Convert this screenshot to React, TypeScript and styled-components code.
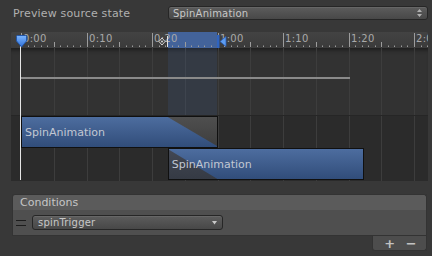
import React from 'react';
import styled, { createGlobalStyle } from 'styled-components';

const PX_PER_FRAME = 6.55;
const ORIGIN = 10; // x of frame 0 inside the timeline
const TIMELINE_W = 417;
const fx = (f: number) => ORIGIN + f * PX_PER_FRAME;

const Global = createGlobalStyle`
  html, body { margin: 0; padding: 0; background: #383838; }
  body { font-family: "DejaVu Sans", "Liberation Sans", sans-serif; }
`;

const Page = styled.div`
  width: 432px;
  height: 256px;
  background: #383838;
  display: flex;
  flex-direction: column;
  overflow: hidden;
`;

const TopRow = styled.div`
  display: flex;
  align-items: center;
  height: 26px;
  padding: 0 4px 0 13px;
`;

const FieldLabel = styled.span`
  width: 155px;
  font-size: 11px;
  letter-spacing: 0.15px;
  color: #b0b0b0;
`;

const Popup = styled.div<{ $width?: number }>`
  ${(p) => (p.$width ? `width: ${p.$width}px;` : 'flex: 1;')}
  box-sizing: border-box;
  height: ${(p) => (p.$width ? 15 : 14)}px;
  border: 1px solid #262626;
  border-radius: 3px;
  background: linear-gradient(#5c5c5c, #484848);
  box-shadow: inset 0 1px 0 rgba(255, 255, 255, 0.07);
  display: flex;
  align-items: center;
  justify-content: space-between;
  padding: 0 5px 0 ${(p) => (p.$width ? 5 : 4)}px;
  font-size: 10px;
  letter-spacing: 0.2px;
  color: #c8c8c8;
`;

const Timeline = styled.div`
  margin: 6px 4px 0 11px;
  width: ${TIMELINE_W}px;
  position: relative;
  display: flex;
  flex-direction: column;
  overflow: hidden;
`;

const Ruler = styled.div`
  position: relative;
  height: 16px;
  background: linear-gradient(#434343, #3b3b3b);
  border-radius: 2px 2px 0 0;
`;

const Band = styled.div<{ $strong?: boolean }>`
  position: absolute;
  top: 0;
  bottom: 0;
  background: ${(p) => (p.$strong ? '#43639a' : 'rgba(66, 104, 170, 0.16)')};
`;

const Layer = styled.svg`
  position: absolute;
  left: 0;
  top: 0;
  width: 100%;
  height: 100%;
`;

const TickLabel = styled.span`
  position: absolute;
  top: 1px;
  font-size: 10px;
  line-height: 12px;
  color: #a9a9a9;
  letter-spacing: 0.3px;
  white-space: nowrap;
`;

const Curves = styled.div`
  position: relative;
  height: 67px;
  background: #323232;
  box-shadow: inset 0 5px 4px -3px rgba(0, 0, 0, 0.45);
  display: flex;
  flex-direction: column;
`;

const CurveLine = styled.div`
  position: relative;
  margin-top: 29px;
  height: 2px;
  background: #8a8a8a;
`;

const Bars = styled.div`
  position: relative;
  height: 65px;
  border-top: 1px solid #262626;
  background: #2b2b2b;
  display: flex;
  flex-direction: column;
`;

const BarRow = styled.div`
  position: relative;
  height: 32px;
  display: flex;
`;

const Bar = styled.div`
  position: relative;
  box-sizing: border-box;
  height: 32px;
  border: 1px solid #101010;
  background: linear-gradient(#4d6d9f, #314d7a);
  overflow: hidden;
  display: flex;
  align-items: center;
  padding-left: 3px;
  font-size: 11px;
  color: #c2c7d2;
`;

const Fade = styled.div<{ $dir: 'out' | 'in' }>`
  position: absolute;
  top: 0;
  bottom: 0;
  background: ${(p) =>
    p.$dir === 'out'
      ? 'linear-gradient(#4f4f4f, #3d3d3d)'
      : 'linear-gradient(#434854, #353a44)'};
  clip-path: ${(p) =>
    p.$dir === 'out'
      ? 'polygon(0 0, 100% 0, 100% 100%)'
      : 'polygon(0 0, 100% 100%, 0 100%)'};
`;

const BarText = styled.span`
  position: relative;
`;

const Playhead = styled.div`
  position: absolute;
  left: 9px;
  top: 14px;
  bottom: 1px;
  width: 1px;
  background: #e6e6e6;
`;

const Marker = styled.svg`
  position: absolute;
`;

const Conditions = styled.div`
  margin: 13px 5px 0 12px;
  display: flex;
  flex-direction: column;
`;

const CondHeader = styled.div`
  height: 16px;
  box-sizing: border-box;
  border: 1px solid #333;
  border-bottom: none;
  border-radius: 3px 3px 0 0;
  background: #5b5b5b;
  display: flex;
  align-items: center;
  padding-left: 7px;
  font-size: 11px;
  color: #c6c6c6;
`;

const CondBody = styled.div`
  height: 26px;
  box-sizing: border-box;
  border: 1px solid #333;
  border-top: none;
  background: #4f4f4f;
  display: flex;
  align-items: center;
  padding-left: 3px;
  gap: 6px;
`;

const Handle = styled.div`
  width: 10px;
  height: 4px;
  border-top: 1px solid #1c1c1c;
  border-bottom: 1px solid #1c1c1c;
  margin-top: 1px;
`;

const Footer = styled.div`
  align-self: flex-end;
  width: 55px;
  height: 15px;
  box-sizing: border-box;
  border: 1px solid #333;
  border-top: none;
  border-radius: 0 0 3px 3px;
  background: #4d4d4d;
  display: flex;
  align-items: center;
  justify-content: space-around;
  padding: 0 4px 0 6px;
`;

const FooterButton = styled.span`
  font-size: 13px;
  font-weight: bold;
  line-height: 13px;
  color: #c2c2c2;
`;

const majorFrames = [0, 10, 20, 30, 40, 50, 60];
const label = (f: number) => `${Math.floor(f / 30)}:${String(f % 30).padStart(2, '0')}`;

const transStart = 22.4;
const transEnd = 30;
const clipLen = 30;

function RulerTicks() {
  const ticks: React.ReactNode[] = [];
  for (let f = 0; f <= 63; f++) {
    const x = Math.round(fx(f)) + 0.5;
    const y1 = f % 10 === 0 ? 1 : f % 5 === 0 ? 10 : 13.5;
    ticks.push(<line key={f} x1={x} x2={x} y1={y1} y2={15} stroke="#9c9c9c" strokeWidth={1} />);
  }
  return (
    <Layer viewBox={`0 0 ${TIMELINE_W} 16`} preserveAspectRatio="none">
      {ticks}
    </Layer>
  );
}

function Grid({ h }: { h: number }) {
  const lines: React.ReactNode[] = [];
  for (let k = 1; k <= 13; k++) {
    const x = Math.round(fx(k * 5)) + 0.5;
    lines.push(<line key={k} x1={x} x2={x} y1={0} y2={h} stroke="#3d3d3d" strokeWidth={1} />);
  }
  return (
    <Layer viewBox={`0 0 ${TIMELINE_W} ${h}`} preserveAspectRatio="none">
      {lines}
    </Layer>
  );
}

export default function App() {
  const bandLeft = fx(transStart);
  const bandWidth = fx(transEnd) - fx(transStart);
  return (
    <Page>
      <Global />
      <TopRow>
        <FieldLabel>Preview source state</FieldLabel>
        <Popup>
          <span>SpinAnimation</span>
          <svg width="5" height="8" viewBox="0 0 5 8">
            <path d="M2.5 0 L5 3 H0 Z M0 5 H5 L2.5 8 Z" fill="#b0b0b0" />
          </svg>
        </Popup>
      </TopRow>

      <Timeline>
        <Ruler>
          <Band $strong style={{ left: bandLeft, width: bandWidth }} />
          <RulerTicks />
          {majorFrames.map((f) => (
            <TickLabel key={f} style={{ left: Math.round(fx(f)) + 2 }}>
              {label(f)}
            </TickLabel>
          ))}
          <Marker width="10" height="11" viewBox="0 0 10 11" style={{ left: bandLeft - 10, top: 4 }}>
            <path d="M4 2 L7 5.5 L4 9 L1 5.5 Z" fill="#3b3b3b" stroke="#d8d8d8" strokeWidth="1" />
            <circle cx="4" cy="5.5" r="1" fill="#d8d8d8" />
            <line x1="9.5" x2="9.5" y1="0" y2="11" stroke="#e0e0e0" />
          </Marker>
          <Marker width="10" height="13" viewBox="0 0 10 13" style={{ left: bandLeft + bandWidth - 0.5, top: 3 }}>
            <rect x="0" y="0" width="2.5" height="13" fill="#2f64c0" />
            <path d="M9 1.5 V11.5 L3 6.5 Z" fill="#5d9cf0" stroke="#2a5db8" strokeWidth="0.8" />
          </Marker>
        </Ruler>

        <Curves>
          <Grid h={67} />
          <Band style={{ left: bandLeft, width: bandWidth }} />
          <CurveLine style={{ marginLeft: fx(0), width: fx(50.2) - fx(0) }} />
        </Curves>

        <Bars>
          <Grid h={65} />
          <BarRow>
            <Bar style={{ marginLeft: fx(0), width: fx(clipLen) - fx(0) }}>
              <Fade $dir="out" style={{ left: bandLeft - fx(0) - 1, width: bandWidth + 1 }} />
              <BarText>SpinAnimation</BarText>
            </Bar>
          </BarRow>
          <BarRow>
            <Bar style={{ marginLeft: bandLeft, width: fx(transStart + clipLen) - bandLeft - 0.5 }}>
              <Fade $dir="in" style={{ left: -1, width: bandWidth }} />
              <BarText>SpinAnimation</BarText>
            </Bar>
          </BarRow>
        </Bars>

        <Playhead />
        <Marker width="13" height="13" viewBox="0 0 13 13" style={{ left: 3.5, top: 3 }}>
          <defs>
            <linearGradient id="pm" x1="0" y1="0" x2="0" y2="1">
              <stop offset="0" stopColor="#7cb6ff" />
              <stop offset="1" stopColor="#2f6fd6" />
            </linearGradient>
          </defs>
          <path d="M1.5 1.5 Q1.5 0.5 2.5 0.5 H10.5 Q11.5 0.5 11.5 1.5 V6 L6.5 12 L1.5 6 Z" fill="url(#pm)" stroke="#2356a8" strokeWidth="1" />
        </Marker>
      </Timeline>

      <Conditions>
        <CondHeader>Conditions</CondHeader>
        <CondBody>
          <Handle />
          <Popup $width={191}>
            <span>spinTrigger</span>
            <svg width="5" height="4" viewBox="0 0 5 4">
              <path d="M0 0 H5 L2.5 3.5 Z" fill="#c8c8c8" />
            </svg>
          </Popup>
        </CondBody>
        <Footer>
          <FooterButton>+</FooterButton>
          <FooterButton>−</FooterButton>
        </Footer>
      </Conditions>
    </Page>
  );
}
